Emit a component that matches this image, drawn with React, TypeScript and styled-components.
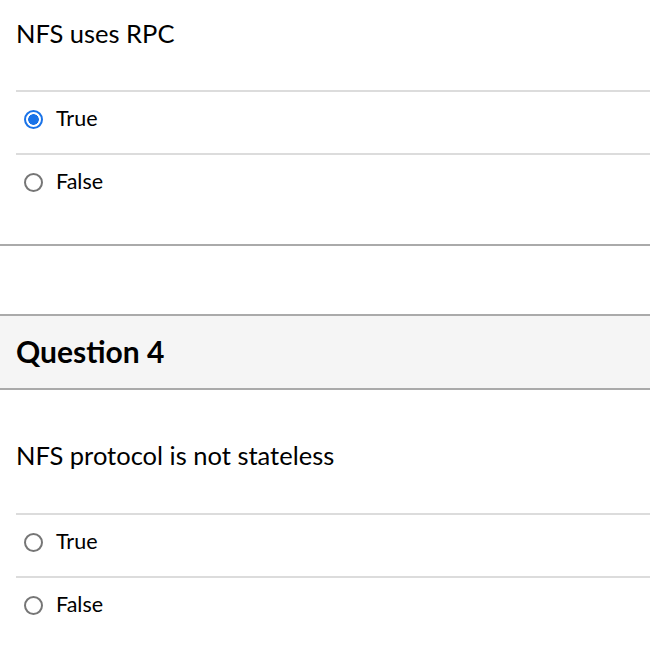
import styled, { createGlobalStyle } from "styled-components";

const GlobalStyle = createGlobalStyle`
  html, body {
    margin: 0;
    padding: 0;
    background: #ffffff;
  }
  body {
    font-family: Lato, "Liberation Sans", sans-serif;
    color: #000000;
  }
`;

const Page = styled.div`
  width: 650px;
  overflow: hidden;
`;

const QuestionBlock = styled.section`
  border-bottom: 2px solid #aaaaaa;
`;

const QuestionHeader = styled.header`
  margin-top: 68px;
  height: 72px;
  display: flex;
  align-items: center;
  padding: 0 16px;
  background: #f5f5f5;
  border-top: 2px solid #aaaaaa;
  border-bottom: 2px solid #aaaaaa;
`;

const HeaderTitle = styled.h2`
  margin: 0 0 2px;
  font-size: 30px;
  line-height: 36px;
  font-weight: 700;
  color: #000000;
`;

const QuestionText = styled.p<{ $top: number; $height: number }>`
  margin: 0;
  box-sizing: border-box;
  height: ${(p) => p.$height}px;
  padding: ${(p) => p.$top}px 16px 0;
  font-size: 25.5px;
  line-height: 1.5;
`;

const Answers = styled.ul`
  list-style: none;
  margin: 0 0 0 16px;
  padding: 0 0 28px;
`;

const Answer = styled.li`
  display: flex;
  align-items: center;
  gap: 13px;
  height: 55px;
  padding: 0 8px 6px;
  border-top: 2px solid #dcdcdc;
  font-size: 21.5px;
`;

const Label = styled.span`
  margin-bottom: 4px;
`;

const Radio = styled.span<{ $checked?: boolean }>`
  flex: none;
  width: 19px;
  height: 19px;
  box-sizing: border-box;
  border-radius: 50%;
  border: 2px solid ${(p) => (p.$checked ? "#1a73e8" : "#767676")};
  background: ${(p) =>
    p.$checked
      ? "radial-gradient(circle, #1a73e8 0 5px, #ffffff 5.6px)"
      : "#ffffff"};
`;

type Question = {
  text: string;
  answers: { label: string; checked?: boolean }[];
};

const QuestionBody = ({
  q,
  top,
  height,
}: {
  q: Question;
  top: number;
  height: number;
}) => (
  <>
    <QuestionText $top={top} $height={height}>
      {q.text}
    </QuestionText>
    <Answers>
      {q.answers.map((a) => (
        <Answer key={a.label}>
          <Radio $checked={a.checked} />
          <Label>{a.label}</Label>
        </Answer>
      ))}
    </Answers>
  </>
);

const q3: Question = {
  text: "NFS uses RPC",
  answers: [{ label: "True", checked: true }, { label: "False" }],
};

const q4: Question = {
  text: "NFS protocol is not stateless",
  answers: [{ label: "True" }, { label: "False" }],
};

export default function App() {
  return (
    <Page>
      <GlobalStyle />
      <QuestionBlock>
        <QuestionBody q={q3} top={13.5} height={90} />
      </QuestionBlock>
      <QuestionHeader>
        <HeaderTitle>Question 4</HeaderTitle>
      </QuestionHeader>
      <QuestionBody q={q4} top={46} height={123} />
    </Page>
  );
}
